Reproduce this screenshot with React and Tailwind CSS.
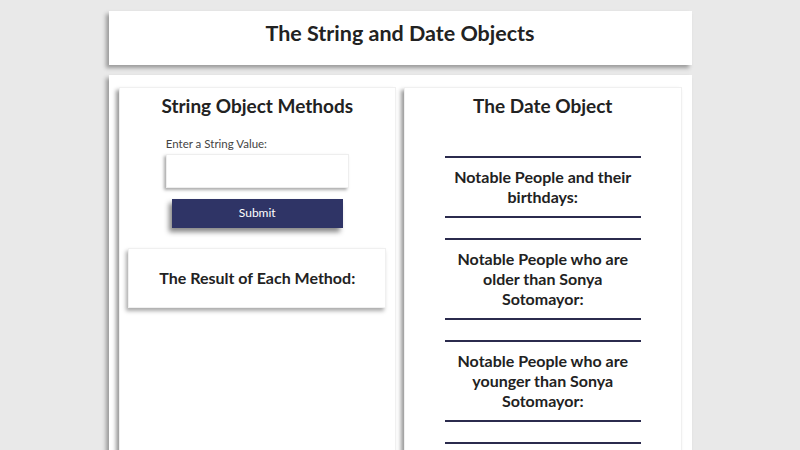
const sections = [
  'Notable People and their birthdays:',
  'Notable People who are older than Sonya Sotomayor:',
  'Notable People who are younger than Sonya Sotomayor:',
];

const App = () => {
  return (
    <div className="min-h-screen bg-[#e9e9e9] pt-[11px] font-['Lato',sans-serif] text-[#222]">
      <div className="mx-auto w-[583px]">
        <header className="flex h-[54px] justify-center bg-white pt-[9px] shadow-[-3px_3px_4px_#9a9a9a]">
          <h1 className="text-[21.5px] leading-[27px] font-bold">The String and Date Objects</h1>
        </header>

        <main className="mt-[10px] flex gap-[8px] bg-white px-[10px] pt-[12px] shadow-[-3px_3px_4px_#9a9a9a]">
          <section className="flex min-h-[400px] flex-1 flex-col items-center border border-[#f0f0f0] shadow-[-3px_3px_4px_#9a9a9a]">
            <h2 className="mt-[4px] text-[19px] font-bold">String Object Methods</h2>
            <form className="mt-[14px] flex w-[183px] flex-col items-center" onSubmit={(e) => e.preventDefault()}>
              <label htmlFor="str" className="self-start text-[11.5px] text-[#444]">Enter a String Value:</label>
              <input
                id="str"
                type="text"
                className="mt-[2px] h-[34px] w-full border border-[#eee] bg-white shadow-[-2px_2px_3px_#aaa] outline-none"
              />
              <button
                type="submit"
                className="mt-[11px] h-[29px] w-[171px] bg-[#2f3466] text-[12px] text-white shadow-[-3px_4px_5px_#888]"
              >
                Submit
              </button>
            </form>
            <div className="mt-[20px] flex h-[60px] w-[258px] items-center justify-center border border-[#f0f0f0] shadow-[-2px_3px_4px_#aaa]">
              <h3 className="text-[16px] font-bold">The Result of Each Method:</h3>
            </div>
          </section>

          <section className="flex min-h-[400px] flex-1 flex-col items-center border border-[#f0f0f0] shadow-[-3px_3px_4px_#9a9a9a]">
            <h2 className="mt-[4px] text-[19px] font-bold">The Date Object</h2>
            <div className="mt-[35px] flex w-[196px] flex-col gap-[20px]">
              {sections.map((s) => (
                <div key={s} className="border-y-2 border-[#2b2b4d] py-[9px] text-center">
                  <h3 className="text-[16px] leading-[20px] font-bold">{s}</h3>
                </div>
              ))}
              <div className="border-t-2 border-[#2b2b4d]" />
            </div>
          </section>
        </main>
      </div>
    </div>
  );
};

export default App;
